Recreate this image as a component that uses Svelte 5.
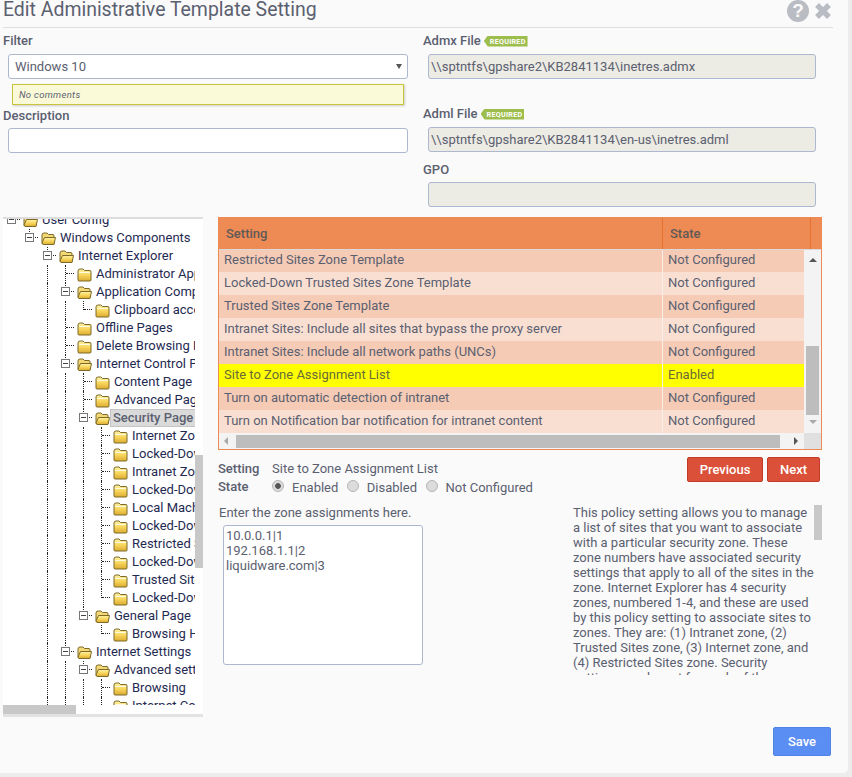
<script>
  // d = depth, g = columns that carry a vertical guide, t = box | tee | end
  const l = 'Locked-Down Zone Template'
  const tree = [
    { d: 0, g: [], t: 'box', n: 'User Config' },
    { d: 1, g: [], t: 'box', n: 'Windows Components' },
    { d: 2, g: [], t: 'box', n: 'Internet Explorer' },
    { d: 3, g: [2], t: 'tee', n: 'Administrator Approved Controls' },
    { d: 3, g: [2], t: 'box', n: 'Application Compatibility' },
    { d: 4, g: [2, 3], t: 'end', n: 'Clipboard access' },
    { d: 3, g: [2], t: 'tee', n: 'Offline Pages' },
    { d: 3, g: [2], t: 'tee', n: 'Delete Browsing History' },
    { d: 3, g: [2], t: 'box', n: 'Internet Control Panel' },
    { d: 4, g: [2, 3], t: 'tee', n: 'Content Page' },
    { d: 4, g: [2, 3], t: 'tee', n: 'Advanced Page' },
    { d: 4, g: [2, 3], t: 'box', n: 'Security Page', sel: true },
    { d: 5, g: [2, 3, 4], t: 'tee', n: 'Internet Zone Template' },
    { d: 5, g: [2, 3, 4], t: 'tee', n: l },
    { d: 5, g: [2, 3, 4], t: 'tee', n: 'Intranet Zone Template' },
    { d: 5, g: [2, 3, 4], t: 'tee', n: l },
    { d: 5, g: [2, 3, 4], t: 'tee', n: 'Local Machine Zone Template' },
    { d: 5, g: [2, 3, 4], t: 'tee', n: l },
    { d: 5, g: [2, 3, 4], t: 'tee', n: 'Restricted Sites Zone' },
    { d: 5, g: [2, 3, 4], t: 'tee', n: l },
    { d: 5, g: [2, 3, 4], t: 'tee', n: 'Trusted Sites Zone' },
    { d: 5, g: [2, 3, 4], t: 'end', n: l },
    { d: 4, g: [2, 3], t: 'box', n: 'General Page' },
    { d: 5, g: [2, 3], t: 'end', n: 'Browsing History' },
    { d: 3, g: [2], t: 'box', n: 'Internet Settings' },
    { d: 4, g: [2, 3], t: 'box', n: 'Advanced settings' },
    { d: 5, g: [2, 3, 4], t: 'tee', n: 'Browsing' },
    { d: 5, g: [2, 3, 4], t: 'tee', n: 'Internet Connection' }
  ]

  const settings = [
    ['Restricted Sites Zone Template', 'Not Configured'],
    ['Locked-Down Trusted Sites Zone Template', 'Not Configured'],
    ['Trusted Sites Zone Template', 'Not Configured'],
    ['Intranet Sites: Include all sites that bypass the proxy server', 'Not Configured'],
    ['Intranet Sites: Include all network paths (UNCs)', 'Not Configured'],
    ['Site to Zone Assignment List', 'Enabled'],
    ['Turn on automatic detection of intranet', 'Not Configured'],
    ['Turn on Notification bar notification for intranet content', 'Not Configured']
  ]
</script>

<main class="dialog">
  <header class="head">
    <h1>Edit Administrative Template Setting</h1>
    <div class="tools">
      <span class="help">?</span>
      <svg width="20" height="20" viewBox="0 0 20 20"><path d="M4 5 L16 17 M16 5 L4 17" stroke="#b9bcc2" stroke-width="5.4" /></svg>
    </div>
  </header>

  <section class="form">
    <div class="col left">
      <label class="lbl" for="filter">Filter</label>
      <div class="selectwrap">
        <select id="filter" class="input"><option>Windows 10</option></select>
      </div>
      <div class="note">No comments</div>
      <label class="lbl desc" for="desc">Description</label>
      <input id="desc" class="input" />
    </div>
    <div class="col right">
      <div class="lbl">Admx File <span class="req">REQUIRED</span></div>
      <input class="input ro" readonly value="\\sptntfs\gpshare2\KB2841134\inetres.admx" />
      <div class="lbl adml">Adml File <span class="req">REQUIRED</span></div>
      <input class="input ro" readonly value="\\sptntfs\gpshare2\KB2841134\en-us\inetres.adml" />
      <div class="lbl gpo">GPO</div>
      <input class="input ro" readonly />
    </div>
  </section>

  <section class="middle">
    <div class="tree">
      <svg width="0" height="0" class="defs">
        <defs>
          <linearGradient id="fold" x1="0" y1="0" x2="0" y2="1">
            <stop offset="0" stop-color="#fff3a8" />
            <stop offset="0.5" stop-color="#f9d65c" />
            <stop offset="1" stop-color="#dcab32" />
          </linearGradient>
        </defs>
      </svg>
      <div class="treeview">
        <div class="rows">
          {#each tree as r}
            <div class="node">
              {#each Array(r.d) as _, c}
                <span class="cell" class:guide={r.g.includes(c)}></span>
              {/each}
              <span class="cell {r.t}">{#if r.t === 'box'}<i></i>{/if}</span>
              <svg class="folder" width="15" height="15" viewBox="0 0 15 15">
                {#if r.t === 'box'}
                  <path d="M1 4 Q1 2 3 2 L6 2 L7.5 3.5 L12 3.5 Q13 3.5 13 5 L13 13 L2 13 Q1 13 1 12 Z" fill="#f3d874" stroke="#7d6a28" />
                  <path d="M3.5 6.5 L14.5 6.5 L13 13.5 L2 13.5 L1 12 Z" fill="url(#fold)" stroke="#7d6a28" />
                {:else}
                  <path d="M1 4 Q1 2 3 2 L6 2 L7.5 3.5 L13 3.5 Q14 3.5 14 5 L14 13 Q14 14 13 14 L2 14 Q1 14 1 13 Z" fill="url(#fold)" stroke="#7d6a28" />
                  <path d="M2 5.5 L13 5.5" stroke="#fffbe0" />
                {/if}
              </svg>
              <span class="name" class:sel={r.sel}>{r.n}</span>
            </div>
          {/each}
        </div>
        <div class="tree-v"><div class="tree-vthumb"></div></div>
      </div>
      <div class="tree-h"><div class="tree-hthumb"></div></div>
    </div>

    <div class="main">
      <div class="grid">
        <div class="grid-head">
          <div class="h1">Setting</div>
          <div class="h2">State</div>
        </div>
        <div class="grid-body">
          <div class="grid-rows">
            {#each settings as s, i}
              <div class="tr" class:odd={i % 2 === 1} class:on={s[1] === 'Enabled'}>
                <div class="td1">{s[0]}</div>
                <div class="td2">{s[1]}</div>
              </div>
            {/each}
          </div>
          <div class="vbar">
            <span class="arrow up"></span>
            <div class="vthumb"></div>
            <span class="arrow down"></span>
          </div>
        </div>
        <div class="hbar">
          <span class="arrow lt"></span>
          <div class="hthumb"></div>
          <span class="arrow rt"></span>
          <div class="corner"></div>
        </div>
      </div>

      <div class="controls">
        <div class="ss">Setting<br />State</div>
        <div class="sinfo">
          <div>Site to Zone Assignment List</div>
          <div class="radios">
            <label><input type="radio" name="st" checked />Enabled</label>
            <label><input type="radio" name="st" />Disabled</label>
            <label><input type="radio" name="st" />Not Configured</label>
          </div>
        </div>
        <div class="btns">
          <button class="red prev">Previous</button>
          <button class="red">Next</button>
        </div>
      </div>

      <div class="details">
        <div class="zones">
          <div>Enter the zone assignments here.</div>
          <textarea readonly>10.0.0.1|1
192.168.1.1|2
liquidware.com|3</textarea>
        </div>
        <div class="policy">
          <p>This policy setting allows you to manage a list of sites that you want to associate with a particular security zone. These zone numbers have associated security settings that apply to all of the sites in the zone. Internet Explorer has 4 security zones, numbered 1-4, and these are used by this policy setting to associate sites to zones. They are: (1) Intranet zone, (2) Trusted Sites zone, (3) Internet zone, and (4) Restricted Sites zone. Security settings can be set for each of these zones.</p>
          <div class="pthumb"></div>
        </div>
      </div>
    </div>
  </section>

  <footer class="foot"><button class="save">Save</button></footer>
</main>

<style>
  :global(body) {
    margin: 0;
    background: #ececec;
  }
  .dialog {
    width: 848px;
    height: 773px;
    box-sizing: border-box;
    padding-left: 3px;
    background: #fafafa;
    border-radius: 0 0 5px 0;
    font-family: Roboto, sans-serif;
    font-size: 13px;
    color: #5b6070;
    overflow: hidden;
  }
  .head {
    width: 830px;
    height: 27px;
    border-bottom: 1px solid #dedede;
    display: flex;
    justify-content: space-between;
  }
  h1 {
    margin: 0;
    font-size: 19.45px;
    font-weight: 400;
    line-height: 20px;
  }
  .tools {
    display: flex;
    align-items: flex-start;
    gap: 4px;
  }
  .help {
    width: 22px;
    height: 22px;
    border-radius: 50%;
    background: #b9bcc2;
    color: #fafafa;
    font: bold 19px/22px "Liberation Sans", sans-serif;
    text-align: center;
  }
  .form {
    display: grid;
    grid-template-columns: 420px 393px;
    height: 189px;
    padding-top: 5px;
    box-sizing: border-box;
  }
  .col {
    display: flex;
    flex-direction: column;
    align-items: flex-start;
  }
  .lbl {
    font-weight: 500;
    font-size: 13px;
    line-height: 16px;
    height: 16px;
    margin-bottom: 5px;
    display: flex;
    align-items: center;
    gap: 3px;
  }
  .lbl.desc {
    margin-top: 3px;
    margin-bottom: 4px;
  }
  .lbl.adml {
    margin-top: 27px;
  }
  .lbl.gpo {
    margin-top: 10px;
    margin-bottom: 4px;
  }
  .input {
    height: 25px;
    box-sizing: border-box;
    border: 1px solid #adb7cf;
    border-radius: 3px;
    background: #fff;
    font: 13px Roboto, sans-serif;
    color: #5b6070;
    padding: 0 6px;
    outline: none;
    display: block;
  }
  .left .input {
    width: 400px;
    margin-left: 5px;
  }
  .left select.input {
    margin-left: 0;
    appearance: none;
  }
  .selectwrap {
    position: relative;
    margin-left: 5px;
    width: 400px;
  }
  .selectwrap::after {
    content: "";
    position: absolute;
    right: 6px;
    top: 10px;
    border: 3px solid transparent;
    border-width: 5px 3px 0;
    border-top-color: #555;
  }
  .ro {
    width: 388px;
    margin-left: 5px;
    background: #ecebe4;
    padding: 0 2px;
  }
  .note {
    width: 392px;
    height: 21px;
    box-sizing: border-box;
    margin: 5px 0 0 9px;
    border: 1px solid #c8c53a;
    background: #fafad9;
    box-shadow: 1px 1px 2px #c9c9c9;
    font-size: 9.5px;
    font-style: italic;
    line-height: 19px;
    padding-left: 6px;
    letter-spacing: 0.3px;
  }
  .req {
    background: #9dbd4c;
    color: #fff;
    font-size: 7.2px;
    font-weight: 700;
    line-height: 11px;
    height: 11px;
    padding: 0 2px 0 6px;
    letter-spacing: 0.25px;
    clip-path: polygon(4px 0, 100% 0, 100% 100%, 4px 100%, 0 50%);
  }
  .middle {
    display: flex;
    align-items: flex-start;
    gap: 15px;
  }
  .tree {
    width: 200px;
    flex: none;
    border-top: 2px solid #dddddd;
    height: 500px;
    box-sizing: border-box;
    display: flex;
    flex-direction: column;
    background: #e2e2e2;
  }
  .defs {
    display: block;
  }
  .treeview {
    height: 486px;
    display: flex;
    background: #fff;
    overflow: hidden;
  }
  .rows {
    width: 192px;
    flex: none;
    overflow: hidden;
    margin-top: -8px;
    height: 494px;
    color: #1f2a52;
  }
  .node {
    display: flex;
    align-items: center;
    height: 18px;
    white-space: nowrap;
  }
  .cell {
    width: 18px;
    height: 18px;
    flex: none;
    position: relative;
  }
  .guide::before,
  .tee::before,
  .end::before,
  .box::before {
    content: "";
    position: absolute;
    left: 8px;
    top: 0;
    bottom: 0;
    border-left: 1px dotted #222;
  }
  .end::before {
    bottom: 9px;
  }
  .box::before {
    bottom: 13px;
  }
  .tee::after,
  .end::after,
  .box::after {
    content: "";
    position: absolute;
    left: 9px;
    width: 8px;
    top: 8px;
    border-top: 1px dotted #222;
  }
  .box::after {
    left: 14px;
    width: 3px;
  }
  .box i {
    position: absolute;
    left: 4px;
    top: 4px;
    width: 9px;
    height: 9px;
    box-sizing: border-box;
    border: 1px solid #777;
    background: linear-gradient(#444, #444) center / 5px 1px no-repeat #fff;
    z-index: 1;
  }
  .folder {
    flex: none;
    margin-left: 2px;
  }
  .name {
    margin-left: 2px;
    padding: 0 1px 0 2px;
    line-height: 18px;
  }
  .sel {
    margin-left: 0;
    padding-left: 3px;
    padding-right: 60px;
    background: #dadada;
    color: #5b6070;
    font-weight: 500;
    outline: 1px solid #c4c4c4;
    outline-offset: -1px;
  }
  .tree-v {
    width: 8px;
    flex: none;
    padding-top: 236px;
  }
  .tree-vthumb {
    height: 113px;
    background: #c8c8c8;
  }
  .tree-h {
    height: 9px;
    background: #fff;
  }
  .tree-hthumb {
    width: 73px;
    height: 9px;
    background: #c8c8c8;
  }
  .main {
    width: 604px;
    flex: none;
  }
  .grid {
    border: 1px solid #ee8a54;
    border-top-width: 1px;
    height: 233px;
    box-sizing: border-box;
    background: #f3f3f3;
  }
  .grid-head {
    height: 31px;
    display: flex;
    background: #ee8a54;
    border-bottom: 1px solid #d9d9d9;
    box-sizing: content-box;
    font-weight: 500;
    line-height: 31px;
    color: #5e5a58;
  }
  .h1 {
    width: 444px;
    box-sizing: border-box;
    padding-left: 7px;
    border-right: 1px solid #e8702f;
  }
  .h2 {
    width: 148px;
    box-sizing: border-box;
    padding-left: 7px;
    border-right: 1px solid #e8702f;
  }
  .grid-body {
    display: flex;
    height: 183px;
  }
  .grid-rows {
    width: 585px;
  }
  .tr {
    display: flex;
    height: 23px;
    line-height: 22px;
    background: #f5cbb6;
  }
  .tr:first-child {
    height: 22px;
    line-height: 20px;
  }
  .tr.odd {
    background: #f9dfd2;
  }
  .tr.on {
    background: #ffff00;
    color: #6a6a3a;
  }
  .td1 {
    width: 444px;
    box-sizing: border-box;
    padding-left: 5px;
    border-right: 1px solid #f7eee9;
  }
  .td2 {
    padding-left: 5px;
  }
  .vbar {
    width: 17px;
    position: relative;
    display: flex;
    flex-direction: column;
    align-items: center;
    padding-top: 8px;
    box-sizing: border-box;
  }
  .vthumb {
    width: 13px;
    height: 69px;
    margin-top: 84px;
    background: #bdbdbd;
  }
  .arrow {
    width: 0;
    height: 0;
    border: 4px solid transparent;
    flex: none;
  }
  .up {
    border-top: 0;
    border-bottom: 4px solid #555;
  }
  .down {
    border-bottom: 0;
    border-top: 4px solid #a9a9a9;
    margin-top: 5px;
  }
  .lt {
    border-left: 0;
    border-right: 4px solid #a9a9a9;
    margin: 0 8px 0 5px;
  }
  .rt {
    border-right: 0;
    border-left: 4px solid #555;
    margin: 0 6px 0 14px;
  }
  .hbar {
    height: 16px;
    display: flex;
    align-items: center;
  }
  .hthumb {
    width: 544px;
    height: 13px;
    background: #bdbdbd;
  }
  .corner {
    flex: 1;
    height: 16px;
    background: #e0e0e0;
  }
  .controls {
    display: flex;
    margin-top: 7px;
    height: 41px;
    line-height: 18px;
  }
  .ss {
    width: 54px;
    font-weight: 500;
    margin-top: 3px;
  }
  .sinfo {
    width: 415px;
    padding-top: 3px;
  }
  .radios {
    display: flex;
    gap: 8.5px;
    margin-top: 1px;
  }
  .radios label {
    display: flex;
    align-items: center;
    height: 18px;
  }
  .radios input {
    appearance: none;
    width: 12px;
    height: 12px;
    margin: -5px 8px 0 0;
    border: 1px solid #b5b5b5;
    border-radius: 50%;
    background: #dcdcdc;
    box-sizing: border-box;
  }
  .radios input:checked {
    background: radial-gradient(circle, #555 0, #555 2.5px, #dcdcdc 3.2px);
  }
  .btns {
    display: flex;
    gap: 4px;
    align-items: flex-start;
  }
  button {
    font: 500 13px Roboto, sans-serif;
    color: #fff;
    border-radius: 2px;
    padding: 0;
  }
  .red {
    width: 53px;
    height: 25px;
    border: 1px solid #c23b28;
    background: #da5038;
  }
  .prev {
    width: 76px;
  }
  .details {
    display: flex;
    margin-top: 7px;
  }
  .zones {
    width: 355px;
    flex: none;
    line-height: 16px;
    padding-left: 1px;
    box-sizing: border-box;
  }
  textarea {
    display: block;
    width: 200px;
    height: 140px;
    margin: 4px 0 0 4px;
    box-sizing: border-box;
    border: 1px solid #adb7cf;
    border-radius: 3px;
    background: #fff;
    font: 13px/15px Roboto, sans-serif;
    color: #5b6070;
    padding: 2px;
    resize: none;
    outline: none;
  }
  .policy {
    width: 249px;
    height: 170px;
    display: flex;
    justify-content: space-between;
    overflow: hidden;
  }
  p {
    margin: 0;
    width: 241px;
    line-height: 15px;
  }
  .pthumb {
    width: 8px;
    height: 35px;
    flex: none;
    background: #c8c8c8;
  }
  .foot {
    display: flex;
    justify-content: flex-end;
    width: 828px;
    margin-top: 10px;
  }
  .save {
    width: 58px;
    height: 29px;
    border: 1px solid #5083e6;
    background: #5b8ef2;
  }
</style>
